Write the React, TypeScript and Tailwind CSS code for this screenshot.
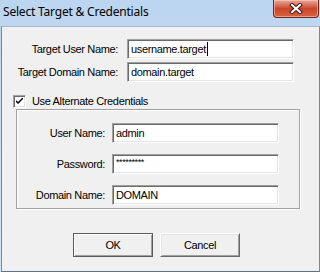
import React from "react";

const sunken =
  "border border-t-[#a0a0a0] border-l-[#a0a0a0] border-r-white border-b-white shadow-[inset_1px_1px_0_#696969,inset_-1px_-1px_0_#e3e3e3] bg-white";

function Field({ value, caret, small }: { value: string; caret?: boolean; small?: boolean }) {
  return (
    <div className={`w-[167px] h-[20px] ${sunken} flex items-center pl-[3px]`}>
      <span className={small ? "text-[9px] tracking-[-0.4px] leading-none pb-[4px]" : "leading-none"}>{value}</span>
      {caret && <span className="w-px h-[14px] bg-black ml-[1px]" />}
    </div>
  );
}

function Row({ label, labelWidth, gap, children }: { label: string; labelWidth: string; gap: string; children: React.ReactNode }) {
  return (
    <div className={`flex items-center ${gap}`}>
      <span className={`${labelWidth} text-right`}>{label}</span>
      {children}
    </div>
  );
}

export default function App() {
  return (
    <div
      className="w-[320px] h-[272px] flex flex-col bg-gradient-to-b from-[#bcd5f0] to-[#d3e4f6] text-black text-[11px] tracking-[-0.35px]"
      style={{ fontFamily: '"Liberation Sans", Arial, sans-serif' }}
    >
      {/* Title bar */}
      <div className="h-[26px] flex items-start justify-between shrink-0">
        <span
          className="pl-[3px] pt-[3px] text-[12px] tracking-[-0.2px] text-black"
          style={{ fontFamily: '"Noto Sans", "Open Sans", sans-serif' }}
        >
          Select Target &amp; Credentials
        </span>
        <div className="w-[46px] h-[18px] mr-[1px] rounded-b-[4px] border border-t-0 border-[#6b2a1f] bg-gradient-to-b from-[#e9a99b] via-[#c9462c] to-[#d8613f] shadow-[inset_0_0_0_1px_rgba(255,220,210,0.5)] flex items-center justify-center">
          <svg width="14" height="11" viewBox="0 0 14 11">
            <path d="M3 2 L11 9 M11 2 L3 9" stroke="#3d1a14" strokeWidth="4" strokeLinecap="square" />
            <path d="M3 2 L11 9 M11 2 L3 9" stroke="#ffffff" strokeWidth="2" strokeLinecap="square" />
          </svg>
        </div>
      </div>

      {/* Client area */}
      <div className="flex-1 ml-[1px] bg-[#f0f0f0] border-t border-t-[#a9b8c8] border-l border-r border-b border-l-[#74879c] border-r-[#74879c] border-b-[#5f7288] flex flex-col">
        {/* Target fields */}
        <div className="pt-[12px] flex flex-col gap-[3px]">
          <Row label="Target User Name:" labelWidth="w-[116px]" gap="gap-[9px]">
            <Field value="username.target" caret />
          </Row>
          <Row label="Target Domain Name:" labelWidth="w-[116px]" gap="gap-[9px]">
            <Field value="domain.target" />
          </Row>
        </div>

        {/* Checkbox */}
        <div className="mt-[13px] ml-[11px] flex items-center gap-[6px] h-[13px]">
          <div className={`w-[13px] h-[13px] ${sunken} flex items-center justify-center`}>
            <svg width="7" height="7" viewBox="0 0 7 7">
              <path d="M0 2 L0 4 L2 6 L7 1 L7 -1 L2 4 Z" fill="#000" />
            </svg>
          </div>
          <span>Use Alternate Credentials</span>
        </div>

        {/* Alternate credentials group */}
        <div className="mt-[1px] ml-[14px] w-[284px] h-[100px] border border-[#a0a0a0] shadow-[inset_1px_1px_0_#ffffff,1px_1px_0_#ffffff] pt-[13px] flex flex-col gap-[11px]">
          <Row label="User Name:" labelWidth="w-[88px]" gap="gap-[7px]">
            <Field value="admin" />
          </Row>
          <Row label="Password:" labelWidth="w-[88px]" gap="gap-[7px]">
            <Field value="*********" small />
          </Row>
          <Row label="Domain Name:" labelWidth="w-[88px]" gap="gap-[7px]">
            <Field value="DOMAIN" />
          </Row>
        </div>

        {/* Buttons */}
        <div className="mt-[24px] ml-[71px] flex gap-[7px]">
          <button className="w-[80px] h-[24px] bg-[#f0f0f0] border border-[#5a5a5a] shadow-[inset_1px_1px_0_#ffffff,inset_-1px_-1px_0_#a0a0a0] flex items-center justify-center">
            OK
          </button>
          <button className="w-[80px] h-[24px] bg-[#f0f0f0] border border-t-white border-l-white border-r-[#696969] border-b-[#696969] shadow-[inset_1px_1px_0_#e3e3e3,inset_-1px_-1px_0_#a0a0a0] flex items-center justify-center">
            Cancel
          </button>
        </div>
      </div>
    </div>
  );
}
